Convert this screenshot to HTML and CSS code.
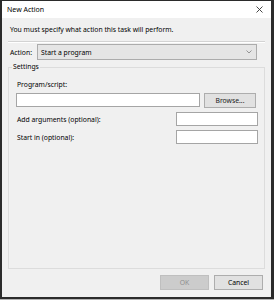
FILE: index.html
```html
<!DOCTYPE html>
<html>
<head>
<meta charset="utf-8">
<link rel="stylesheet" href="styles.css">
</head>
<body>
<div class="window">
  <div class="titlebar">
    <span class="title">New Action</span>
    <svg class="close" width="7" height="7" viewBox="0 0 7 7"><path d="M0.5 0.5L6.5 6.5M6.5 0.5L0.5 6.5" stroke="#333" stroke-width="0.9" fill="none"/></svg>
  </div>
  <div class="content">
    <div class="intro">You must specify what action this task will perform.</div>
    <div class="sep"></div>
    <div class="action-row">
      <span class="action-label">Action:</span>
      <div class="select">
        <span>Start a program</span>
        <svg class="chev" width="6" height="4" viewBox="0 0 6 4"><path d="M0.5 0.5L3 3L5.5 0.5" stroke="#8a8a8a" stroke-width="0.9" fill="none"/></svg>
      </div>
    </div>
    <fieldset class="settings">
      <legend>Settings</legend>
      <div class="field-label">Program/script:</div>
      <div class="row1">
        <div class="input wide"></div>
        <div class="btn browse">Browse...</div>
      </div>
      <div class="row">
        <span class="row-label">Add arguments (optional):</span>
        <div class="input short"></div>
      </div>
      <div class="row">
        <span class="row-label">Start in (optional):</span>
        <div class="input short"></div>
      </div>
    </fieldset>
    <div class="footer">
      <div class="btn ok">OK</div>
      <div class="btn cancel">Cancel</div>
    </div>
  </div>
</div>
</body>
</html>
```

FILE: styles.css
```css
html, body {
  margin: 0;
  padding: 0;
  background: #b4b4b4;
}
body {
  width: 274px;
  height: 300px;
  overflow: hidden;
  font-family: "Noto Sans", "Open Sans", sans-serif;
  font-size: 6.8px;
  color: #000;
}
.window {
  box-sizing: border-box;
  width: 274px;
  height: 299px;
  border-top: 1px solid #2b2b2b;
  border-left: 2px solid #2b2b2b;
  border-right: 3px solid #2b2b2b;
  border-bottom: 2px solid #2b2b2b;
  background: #f0f0f0;
  display: flex;
  flex-direction: column;
}
.titlebar {
  height: 17px;
  background: #fff;
  display: flex;
  align-items: center;
  justify-content: space-between;
  padding: 0 8px 0 5px;
}
.title {
  font-size: 7px;
}
.close {
  display: block;
}
.content {
  flex: 1;
  display: flex;
  flex-direction: column;
  padding: 0 6px;
}
.intro {
  margin-top: 6px;
  padding-left: 2px;
  line-height: 12px;
}
.sep {
  margin-top: 5px;
  height: 1px;
  border-top: 1px solid #d3d3d3;
  background: #fff;
}
.action-row {
  margin-top: 1px;
  display: flex;
  align-items: center;
  height: 16px;
}
.action-label {
  width: 29px;
  padding-left: 2px;
  box-sizing: border-box;
}
.select {
  box-sizing: border-box;
  width: 220px;
  height: 16px;
  background: #e5e5e5;
  border: 1px solid #acacac;
  display: flex;
  align-items: center;
  justify-content: space-between;
  padding: 0 4px 0 3px;
}
.chev {
  display: block;
}
.settings {
  flex: 1;
  margin: 2px 0 0 0;
  padding: 0 6px 0 7px;
  border: 1px solid #dcdcdc;
  min-width: 0;
}
.settings legend {
  padding: 0 1px;
  margin-left: -4px;
  line-height: 10px;
}
.field-label {
  margin-top: 8px;
  padding-left: 1px;
  line-height: 10px;
}
.row1 {
  margin-top: 3px;
  display: flex;
  gap: 4px;
}
.input {
  box-sizing: border-box;
  height: 14px;
  background: #fff;
  border: 1px solid #a5a5a5;
}
.wide {
  width: 184px;
}
.short {
  width: 82px;
}
.btn {
  box-sizing: border-box;
  height: 15px;
  display: flex;
  align-items: center;
  justify-content: center;
  border: 1px solid #adadad;
  background: #e1e1e1;
}
.browse {
  width: 52px;
  color: #1a1a1a;
}
.row {
  margin-top: 4px;
  display: flex;
  align-items: center;
  justify-content: space-between;
}
.row-label {
  padding-left: 1px;
}
.footer {
  display: flex;
  justify-content: flex-end;
  gap: 5px;
  padding: 6px 2px 7px 0;
}
.ok {
  width: 49px;
  background: #cccccc;
  border-color: #bfbfbf;
  color: #8c8c8c;
}
.cancel {
  width: 49px;
}
```
